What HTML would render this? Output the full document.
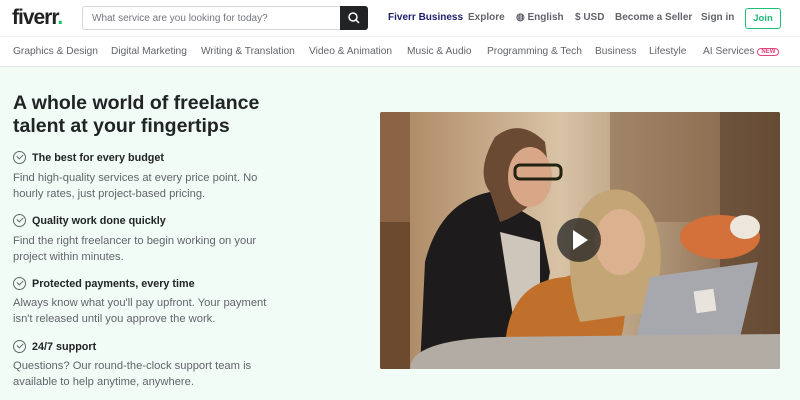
<!DOCTYPE html>
<html><head><meta charset="utf-8"><style>
*{margin:0;padding:0;box-sizing:border-box}
body{width:800px;height:400px;overflow:hidden;font-family:"Liberation Sans",sans-serif;background:#f1fcf6;position:relative;color:#404145}
.top{position:absolute;left:0;top:0;width:800px;height:67px;background:#fff;border-bottom:1px solid #e4e5e7}
.row2{position:absolute;top:36px;left:0;width:800px;border-top:1px solid #eee}
.logo{position:absolute;left:12px;top:6px;font-size:21px;font-weight:bold;color:#222;letter-spacing:-1px}
.logo span{color:#1dbf73}
.search{position:absolute;left:82px;top:6px;width:286px;height:24px;border:1px solid #d5d6d9;border-radius:3px}
.search div{position:absolute;left:9px;top:6px;font-size:10px;color:#74767e}
.sbtn{position:absolute;left:340px;top:6px;width:28px;height:24px;background:#222325;border-radius:0 3px 3px 0}
.n{position:absolute;top:12px;font-size:10px;font-weight:bold;color:#62646a;white-space:nowrap}
.join{position:absolute;left:745px;top:8px;width:36px;height:21px;border:1px solid #1dbf73;border-radius:3px;color:#1dbf73;font-size:9.5px;font-weight:bold;text-align:center;line-height:19px}
.c{position:absolute;top:46px;font-size:10.2px;color:#62646a;white-space:nowrap}
h1{position:absolute;left:13px;top:92px;font-size:19.5px;line-height:23px;color:#222325;font-weight:bold}
.ft{position:absolute;left:13px;font-size:10.8px;font-weight:bold;color:#222325}
.ft i{display:inline-block;width:13px;height:13px;border:1.3px solid #62646a;border-radius:50%;vertical-align:-3px;margin-right:6px;position:relative}
.ft i:after{content:"";position:absolute;left:3px;top:2px;width:5px;height:3px;border-left:1.3px solid #62646a;border-bottom:1.3px solid #62646a;transform:rotate(-45deg)}
.d{position:absolute;left:13px;font-size:11.2px;line-height:16px;color:#62646a;width:262px}
.photo{position:absolute;left:380px;top:112px;width:400px;height:257px;overflow:hidden;border-radius:2px}
</style></head><body>
<div class="top">
<div class="logo">fiverr<span>.</span></div>
<div class="search"><div>What service are you looking for today?</div></div>
<div class="sbtn"><svg width="28" height="24"><circle cx="13" cy="11" r="4" fill="none" stroke="#fff" stroke-width="1.5"/><path d="M16 14l3 3" stroke="#fff" stroke-width="1.5"/></svg></div>
<div class="n" style="left:388px;color:#1f1d6b">Fiverr Business</div>
<div class="n" style="left:468px">Explore</div>
<div class="n" style="left:516px">◍ English</div>
<div class="n" style="left:575px">$ USD</div>
<div class="n" style="left:615px">Become a Seller</div>
<div class="n" style="left:701px">Sign in</div>
<div class="join">Join</div>
<div class="row2"></div>
<div class="c" style="left:13px">Graphics &amp; Design</div>
<div class="c" style="left:111px">Digital Marketing</div>
<div class="c" style="left:201px">Writing &amp; Translation</div>
<div class="c" style="left:309px">Video &amp; Animation</div>
<div class="c" style="left:407px">Music &amp; Audio</div>
<div class="c" style="left:487px">Programming &amp; Tech</div>
<div class="c" style="left:595px">Business</div>
<div class="c" style="left:649px">Lifestyle</div>
<div class="c" style="left:703px">AI Services <span style="display:inline-block;font-size:6px;color:#e6427e;border:1px solid #e6427e;border-radius:6px;padding:0 3px;vertical-align:1px;font-weight:bold">NEW</span></div>
</div>
<h1>A whole world of freelance<br>talent at your fingertips</h1>
<div class="ft" style="top:151px"><i></i>The best for every budget</div>
<div class="d" style="top:170px">Find high-quality services at every price point. No hourly rates, just project-based pricing.</div>
<div class="ft" style="top:214px"><i></i>Quality work done quickly</div>
<div class="d" style="top:233px">Find the right freelancer to begin working on your project within minutes.</div>
<div class="ft" style="top:277px"><i></i>Protected payments, every time</div>
<div class="d" style="top:295px">Always know what you'll pay upfront. Your payment isn't released until you approve the work.</div>
<div class="ft" style="top:340px"><i></i>24/7 support</div>
<div class="d" style="top:358px">Questions? Our round-the-clock support team is available to help anytime, anywhere.</div>
<div class="photo"><svg width="400" height="257" viewBox="0 0 400 257">
<defs><linearGradient id="bg" x1="0" y1="0" x2="1" y2="0"><stop offset="0" stop-color="#a8825c"/><stop offset=".45" stop-color="#d9c3a6"/><stop offset="1" stop-color="#7a5a3e"/></linearGradient></defs>
<rect width="400" height="257" fill="url(#bg)"/>
<rect x="0" y="0" width="30" height="257" fill="#8a6444"/>
<rect x="0" y="110" width="30" height="147" fill="#6b4a30"/>
<rect x="230" y="0" width="110" height="110" fill="#8b6d4e" opacity=".6"/>
<rect x="340" y="0" width="60" height="257" fill="#5e4430" opacity=".7"/>
<ellipse cx="340" cy="125" rx="40" ry="22" fill="#d4703a"/>
<ellipse cx="365" cy="115" rx="15" ry="12" fill="#ece6dc"/>
<path d="M40 257 L45 150 Q60 90 110 80 L160 110 L170 160 L150 257Z" fill="#1d1b1b"/>
<path d="M110 80 Q95 60 115 25 Q140 5 165 30 L170 70 Q150 100 120 110Z" fill="#6b4a33"/>
<ellipse cx="150" cy="65" rx="22" ry="30" fill="#d8a787"/>
<rect x="135" y="53" width="46" height="14" rx="5" fill="none" stroke="#221" stroke-width="3"/>
<path d="M120 120 L140 250 L160 250 L160 130Z" fill="#cfc6bb"/>
<path d="M125 257 Q120 170 185 165 L230 150 Q260 190 230 257Z" fill="#c0702a"/>
<path d="M200 100 Q220 70 250 80 Q285 100 280 160 L270 200 L200 210 Q180 150 200 100Z" fill="#c4a576"/>
<ellipse cx="240" cy="130" rx="25" ry="33" fill="#dcb190"/>
<path d="M270 165 L378 150 L360 225 L255 232Z" fill="#a7a8ad"/>
<rect x="315" y="178" width="20" height="22" fill="#e8e3dc" transform="rotate(-8 325 189)"/>
<path d="M30 257 Q30 228 120 225 L400 222 L400 257Z" fill="#b3aca4"/>
<circle cx="199" cy="128" r="22" fill="#222" opacity=".75"/>
<path d="M193 118 L208 128 L193 138Z" fill="#fff"/>
</svg></div>
</body></html>
